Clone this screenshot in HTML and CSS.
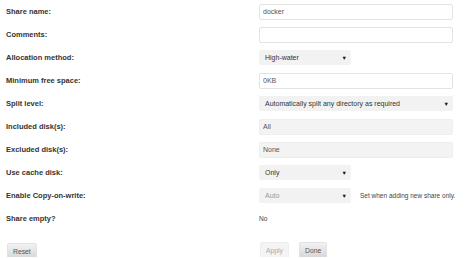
FILE: index.html
```html
<!doctype html>
<html>
    <head>
        <title>Share Settings</title>
        <link rel="stylesheet" href="styles.css">
    </head>
    <body>
        <form class="share">
            <div class="row">
                <label>Share name:</label>
                <div class="field"><input type="text" value="docker"></div>
            </div>
            <div class="row">
                <label>Comments:</label>
                <div class="field"><input type="text" value=""></div>
            </div>
            <div class="row">
                <label>Allocation method:</label>
                <div class="field"><div class="select narrow"><span>High-water</span><span class="arrow">&#9660;</span></div></div>
            </div>
            <div class="row">
                <label>Minimum free space:</label>
                <div class="field"><input type="text" value="0KB"></div>
            </div>
            <div class="row">
                <label>Split level:</label>
                <div class="field"><div class="select"><span>Automatically split any directory as required</span><span class="arrow">&#9660;</span></div></div>
            </div>
            <div class="row">
                <label>Included disk(s):</label>
                <div class="field"><input type="text" class="readonly" value="All" readonly></div>
            </div>
            <div class="row">
                <label>Excluded disk(s):</label>
                <div class="field"><input type="text" class="readonly" value="None" readonly></div>
            </div>
            <div class="row">
                <label>Use cache disk:</label>
                <div class="field"><div class="select narrow"><span>Only</span><span class="arrow">&#9660;</span></div></div>
            </div>
            <div class="row">
                <label>Enable Copy-on-write:</label>
                <div class="field">
                    <div class="select narrow disabled"><span>Auto</span><span class="arrow">&#9660;</span></div>
                    <span class="note">Set when adding new share only.</span>
                </div>
            </div>
            <div class="row">
                <label>Share empty?</label>
                <div class="field"><span class="plain">No</span></div>
            </div>
            <div class="row buttons">
                <div><button type="button">Reset</button></div>
                <div class="field">
                    <button type="button" class="disabled">Apply</button>
                    <button type="button">Done</button>
                </div>
            </div>
        </form>
    </body>
</html>
```

FILE: styles.css
```css
html {
    background: white;
    font-family: "Liberation Sans", Arial, sans-serif;
}
body {
    margin: 0;
}
.share {
    padding: 0 21px 0 6px;
}
.row {
    display: grid;
    grid-template-columns: 253px 1fr;
    align-items: center;
    height: 23px;
}
.row label {
    font-weight: bold;
    font-size: 7.5px;
    color: #333;
}
.field {
    display: flex;
    align-items: center;
    gap: 9px;
}
input {
    box-sizing: border-box;
    width: 100%;
    height: 16px;
    padding: 0 3px;
    border: 1px solid #e3e3e3;
    border-radius: 2px;
    font-family: inherit;
    font-size: 7px;
    color: #555;
    background: white;
    outline: none;
}
input.readonly {
    background: #f3f3f3;
    border-color: #eee;
}
.select {
    box-sizing: border-box;
    display: flex;
    align-items: center;
    justify-content: space-between;
    width: 100%;
    height: 15px;
    padding: 0 4px 0 6px;
    background: #f2f2f2;
    border-radius: 2px;
    font-size: 7px;
    color: #333;
}
.select.narrow {
    width: 92px;
    flex: none;
}
.select .arrow {
    font-size: 5.5px;
    color: #111;
}
.select.disabled {
    color: #999;
}
.note, .plain {
    font-size: 6.6px;
    color: #444;
    white-space: nowrap;
}
.note {
    font-size: 6.5px;
}
.buttons {
    margin-top: 10px;
    height: 17px;
}
button {
    height: 17px;
    padding: 0 5px;
    border: 1px solid #e2e2e2;
    border-radius: 2px;
    background: linear-gradient(#f2f2f2, #d6d6d6);
    font-family: inherit;
    font-size: 6.8px;
    color: #555;
    margin-left: 1px;
}
button.disabled {
    background: #f4f4f4;
    border-color: #eee;
    color: #aaa;
}
```
